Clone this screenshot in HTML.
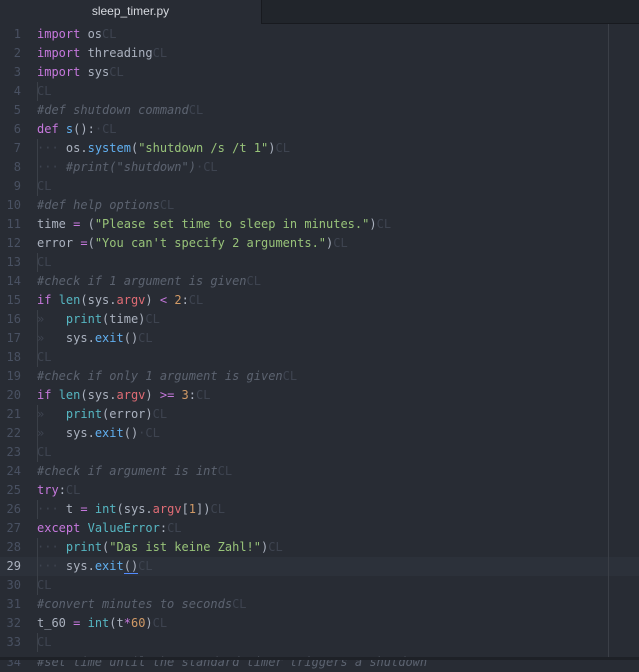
<!DOCTYPE html>
<html><head><meta charset="utf-8"><style>
*{margin:0;padding:0;box-sizing:border-box}
body{width:639px;height:660px;overflow:hidden;background:#282c34;font-family:"DejaVu Sans Mono","Liberation Mono",monospace;font-size:12px;color:#abb2bf;position:relative}
.tabs{position:absolute;left:0;top:0;width:639px;height:24px;background:#21252b;border-bottom:1px solid #181a1f}
.tab{position:absolute;left:0;top:0;width:262px;height:24px;background:#282c34;border-right:1px solid #181a1f;color:#d7dae0;font-family:"Liberation Sans",sans-serif;font-size:12px;text-align:center;line-height:22px}
.guide{position:absolute;left:608px;top:24px;width:1px;height:636px;background:#3b3f47}
.hl{position:absolute;left:0;top:557px;width:639px;height:19px;background:#2c313a}
.w{position:absolute;left:0;top:1px;width:639px;height:660px}
.ln{position:absolute;left:0;width:21px;text-align:right;color:#495162;height:19px;line-height:19px}
.l{position:absolute;left:37px;height:19px;line-height:19px;white-space:pre}
.ig{position:absolute;left:37px;width:1px;background:#3b4048}
.k{color:#c678dd}.f{color:#61afef}.b{color:#56b6c2}.s{color:#98c379}.n{color:#d19a66}.p{color:#e06c75}
.c{color:#5c6370;font-style:italic}.i{color:#3e4450}
.bot{position:absolute;left:0;top:657px;width:639px;height:3px;background:#1e2127}
</style></head><body>
<div class="tabs"><div class="tab">sleep_timer.py</div></div>
<div class="hl"></div>
<div class="guide"></div>
<div class="w">
<div class="ig" style="top:81px;height:19px"></div>
<div class="ig" style="top:138px;height:38px"></div>
<div class="ig" style="top:176px;height:19px"></div>
<div class="ig" style="top:252px;height:19px"></div>
<div class="ig" style="top:309px;height:57px"></div>
<div class="ig" style="top:404px;height:57px"></div>
<div class="ig" style="top:499px;height:19px"></div>
<div class="ig" style="top:537px;height:57px"></div>
<div class="ig" style="top:632px;height:19px"></div>

<div class="ln" style="top:24px">1</div><div class="l" style="top:24px"><span class="k">import</span> os<span class="i">CL</span></div>
<div class="ln" style="top:43px">2</div><div class="l" style="top:43px"><span class="k">import</span> threading<span class="i">CL</span></div>
<div class="ln" style="top:62px">3</div><div class="l" style="top:62px"><span class="k">import</span> sys<span class="i">CL</span></div>
<div class="ln" style="top:81px">4</div><div class="l" style="top:81px"><span class="i">CL</span></div>
<div class="ln" style="top:100px">5</div><div class="l" style="top:100px"><span class="c">#def shutdown command</span><span class="i">CL</span></div>
<div class="ln" style="top:119px">6</div><div class="l" style="top:119px"><span class="k">def</span> <span class="f">s</span>():<span class="i">·CL</span></div>
<div class="ln" style="top:138px">7</div><div class="l" style="top:138px"><span class="i">···</span> os.<span class="f">system</span>(<span class="s">"shutdown /s /t 1"</span>)<span class="i">CL</span></div>
<div class="ln" style="top:157px">8</div><div class="l" style="top:157px"><span class="i">···</span> <span class="c">#print("shutdown")</span><span class="i">·CL</span></div>
<div class="ln" style="top:176px">9</div><div class="l" style="top:176px"><span class="i">CL</span></div>
<div class="ln" style="top:195px">10</div><div class="l" style="top:195px"><span class="c">#def help options</span><span class="i">CL</span></div>
<div class="ln" style="top:214px">11</div><div class="l" style="top:214px">time <span class="k">=</span> (<span class="s">"Please set time to sleep in minutes."</span>)<span class="i">CL</span></div>
<div class="ln" style="top:233px">12</div><div class="l" style="top:233px">error <span class="k">=</span>(<span class="s">"You can't specify 2 arguments."</span>)<span class="i">CL</span></div>
<div class="ln" style="top:252px">13</div><div class="l" style="top:252px"><span class="i">CL</span></div>
<div class="ln" style="top:271px">14</div><div class="l" style="top:271px"><span class="c">#check if 1 argument is given</span><span class="i">CL</span></div>
<div class="ln" style="top:290px">15</div><div class="l" style="top:290px"><span class="k">if</span> <span class="b">len</span>(sys.<span class="p">argv</span>) <span class="k">&lt;</span> <span class="n">2</span>:<span class="i">CL</span></div>
<div class="ln" style="top:309px">16</div><div class="l" style="top:309px"><span class="i">»</span>   <span class="b">print</span>(time)<span class="i">CL</span></div>
<div class="ln" style="top:328px">17</div><div class="l" style="top:328px"><span class="i">»</span>   sys.<span class="f">exit</span>()<span class="i">CL</span></div>
<div class="ln" style="top:347px">18</div><div class="l" style="top:347px"><span class="i">CL</span></div>
<div class="ln" style="top:366px">19</div><div class="l" style="top:366px"><span class="c">#check if only 1 argument is given</span><span class="i">CL</span></div>
<div class="ln" style="top:385px">20</div><div class="l" style="top:385px"><span class="k">if</span> <span class="b">len</span>(sys.<span class="p">argv</span>) <span class="k">&gt;=</span> <span class="n">3</span>:<span class="i">CL</span></div>
<div class="ln" style="top:404px">21</div><div class="l" style="top:404px"><span class="i">»</span>   <span class="b">print</span>(error)<span class="i">CL</span></div>
<div class="ln" style="top:423px">22</div><div class="l" style="top:423px"><span class="i">»</span>   sys.<span class="f">exit</span>()<span class="i">·CL</span></div>
<div class="ln" style="top:442px">23</div><div class="l" style="top:442px"><span class="i">CL</span></div>
<div class="ln" style="top:461px">24</div><div class="l" style="top:461px"><span class="c">#check if argument is int</span><span class="i">CL</span></div>
<div class="ln" style="top:480px">25</div><div class="l" style="top:480px"><span class="k">try</span>:<span class="i">CL</span></div>
<div class="ln" style="top:499px">26</div><div class="l" style="top:499px"><span class="i">···</span> t <span class="k">=</span> <span class="b">int</span>(sys.<span class="p">argv</span>[<span class="n">1</span>])<span class="i">CL</span></div>
<div class="ln" style="top:518px">27</div><div class="l" style="top:518px"><span class="k">except</span> <span class="b">ValueError</span>:<span class="i">CL</span></div>
<div class="ln" style="top:537px">28</div><div class="l" style="top:537px"><span class="i">···</span> <span class="b">print</span>(<span class="s">"Das ist keine Zahl!"</span>)<span class="i">CL</span></div>
<div class="ln" style="top:556px;color:#abb2bf">29</div><div class="l" style="top:556px"><span class="i">···</span> sys.<span class="f">exit</span><span style="border-bottom:1px solid #528bff">()</span><span class="i">CL</span></div>
<div class="ln" style="top:575px">30</div><div class="l" style="top:575px"><span class="i">CL</span></div>
<div class="ln" style="top:594px">31</div><div class="l" style="top:594px"><span class="c">#convert minutes to seconds</span><span class="i">CL</span></div>
<div class="ln" style="top:613px">32</div><div class="l" style="top:613px">t_60 <span class="k">=</span> <span class="b">int</span>(t<span class="k">*</span><span class="n">60</span>)<span class="i">CL</span></div>
<div class="ln" style="top:632px">33</div><div class="l" style="top:632px"><span class="i">CL</span></div>
<div class="ln" style="top:652px">34</div><div class="l" style="top:652px"><span class="c">#set time until the standard timer triggers a shutdown</span></div>
</div>
<div class="bot"></div>
</body></html>
